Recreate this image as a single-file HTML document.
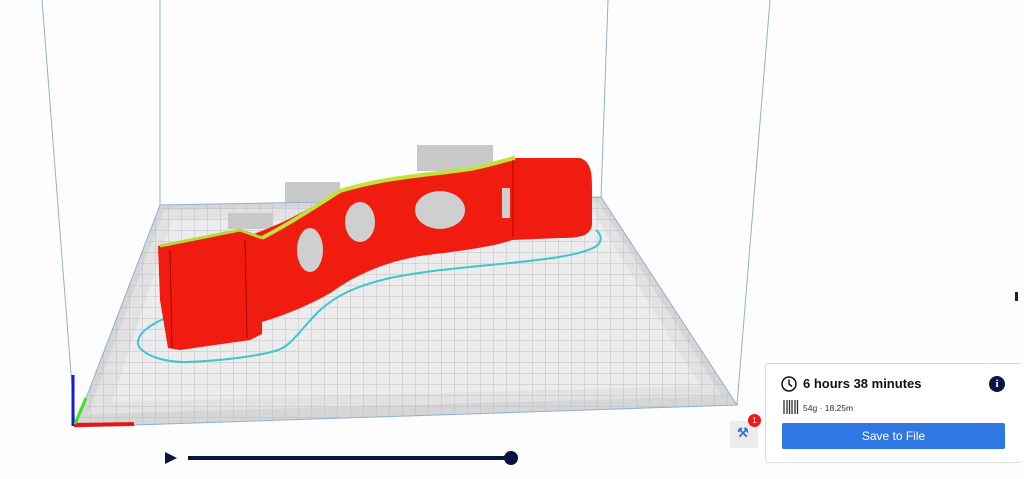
<!DOCTYPE html>
<html><head><meta charset="utf-8"><style>
html,body{margin:0;padding:0;width:1024px;height:479px;overflow:hidden;background:#fff;font-family:"Liberation Sans",sans-serif}
.abs{position:absolute}
</style></head><body>
<svg class="abs" style="left:0;top:0" width="1024" height="479" viewBox="0 0 1024 479">
<defs>
<pattern id="g" width="13" height="11" patternUnits="userSpaceOnUse"><path d="M13 0V11M0 11H13" stroke="#b4b8c0" stroke-width="1" fill="none"/></pattern>
</defs>
<rect width="1024" height="479" fill="#fdfdfd"/>
<g stroke="#8fb0d8" stroke-width="1" fill="none">
<line x1="42" y1="0" x2="75" y2="425"/>
<line x1="160" y1="0" x2="160" y2="205"/>
<line x1="608" y1="0" x2="601" y2="197"/>
<line x1="770" y1="0" x2="737" y2="405"/>
</g>
<polygon points="160,205 601,197 737,405 75,427" fill="#d6d6d6"/>
<polygon points="164,210 598,202 722,396 88,414" fill="#e2e2e2"/>
<polygon points="172,220 593,212 700,386 112,402" fill="#ececec"/>
<polygon points="160,205 601,197 737,405 75,427" fill="url(#g)" opacity="0.85"/>
<polygon points="160,205 601,197 737,405 75,427" fill="none" stroke="#8fb0d8"/>
<g fill="#c8c8c8">
<rect x="417" y="145" width="76" height="26"/>
<rect x="285" y="182" width="55" height="20"/>
<rect x="228" y="213" width="45" height="16"/>
</g>
<path d="M145,330 C138,336 135,345 142,350 C150,357 165,362 185,362 C220,361 260,356 278,350 C292,345 300,330 318,312 C335,296 355,286 390,278 C430,270 470,267 510,263 C550,259 580,255 595,247 C603,242 602,235 596,230 M145,330 C155,322 165,318 172,316" fill="none" stroke="#3cc6cf" stroke-width="2"/>
<path d="M245,237 C290,222 318,203 335,193 C375,178 430,176 470,170 C500,165 505,160 515,158 L580,158 C592,162 592,175 592,190 L592,225 C590,236 580,238 560,238 L512,240 C490,248 450,252 420,256 C385,262 355,275 332,292 C310,305 285,315 262,322 Z" fill="#f01c10"/>
<path d="M158,246 L240,230 L262,240 L262,334 L250,340 L180,350 L168,348 L160,300 Z" fill="#f01c10"/>
<path d="M160,246 L240,230 L262,238" fill="none" stroke="#b5d83a" stroke-width="3"/>
<path d="M262,238 C300,218 325,200 340,191 C385,177 430,175 470,169 C495,164 505,160 515,158" fill="none" stroke="#c2e23a" stroke-width="4"/>
<line x1="245" y1="240" x2="247" y2="338" stroke="#a00" stroke-width="1"/>
<line x1="170" y1="250" x2="172" y2="348" stroke="#a00" stroke-width="1"/>
<line x1="513" y1="160" x2="513" y2="237" stroke="#b00" stroke-width="1"/>
<g fill="#cfcfcf">
<ellipse cx="310" cy="250" rx="13" ry="22"/>
<ellipse cx="360" cy="222" rx="15" ry="20"/>
<ellipse cx="440" cy="210" rx="25" ry="19"/>
<rect x="502" y="188" width="8" height="30"/>
</g>
<line x1="73" y1="375" x2="73" y2="426" stroke="#1a1adc" stroke-width="3"/>
<line x1="74" y1="425" x2="134" y2="424" stroke="#e81414" stroke-width="4"/>
<line x1="75" y1="424" x2="86" y2="398" stroke="#3ee02a" stroke-width="3"/>
<polygon points="165,452 177,458 165,464" fill="#0a1440"/>
<line x1="188" y1="458" x2="511" y2="458" stroke="#0a1440" stroke-width="4"/>
<circle cx="511" cy="458" r="7" fill="#0a1440"/>
<rect x="1015" y="292" width="3" height="9" fill="#222"/>
</svg>
<div class="abs" style="left:730px;top:421px;width:28px;height:27px;background:#ececec;border-radius:2px"></div>
<div class="abs" style="left:737px;top:425px;color:#3a72d0;font-size:13px;font-weight:bold">⚒</div>
<div class="abs" style="left:748px;top:414px;width:13px;height:13px;border-radius:50%;background:#f01818;color:#fff;font-size:8px;text-align:center;line-height:13px">1</div>
<div class="abs" style="left:765px;top:363px;width:256px;height:98px;background:#fff;border:1px solid #dcdcdc;border-radius:3px;border-right:none"></div>
<svg class="abs" style="left:781px;top:376px" width="16" height="16"><circle cx="8" cy="8" r="7" fill="none" stroke="#111" stroke-width="1.5"/><path d="M8 3.5V8L11 10.5" fill="none" stroke="#111" stroke-width="1.5"/></svg>
<div class="abs" style="left:803px;top:376px;font-size:13px;font-weight:bold;color:#111">6 hours 38 minutes</div>
<div class="abs" style="left:989px;top:376px;width:16px;height:16px;border-radius:50%;background:#0a1440;color:#fff;font-size:11px;font-weight:bold;text-align:center;line-height:16px;font-family:'Liberation Serif',serif">i</div>
<svg class="abs" style="left:783px;top:400px" width="16" height="14"><g stroke="#333" stroke-width="1.3"><line x1="1" y1="0" x2="1" y2="14"/><line x1="4" y1="0" x2="4" y2="14"/><line x1="6.5" y1="0" x2="6.5" y2="14"/><line x1="9" y1="0" x2="9" y2="14"/><line x1="12" y1="0" x2="12" y2="14"/><line x1="14.5" y1="0" x2="14.5" y2="14"/></g></svg>
<div class="abs" style="left:803px;top:403px;font-size:8.5px;color:#333">54g · 18.25m</div>
<div class="abs" style="left:782px;top:423px;width:223px;height:26px;background:#2f78e4;border-radius:2px;color:#fff;font-size:12px;text-align:center;line-height:26px">Save to File</div>
</body></html>
